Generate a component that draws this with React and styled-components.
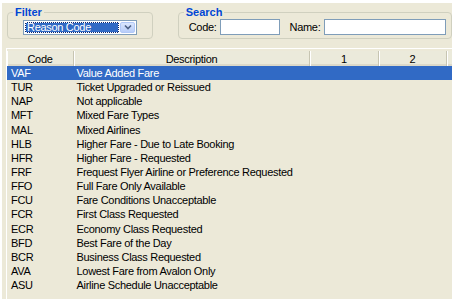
import React from "react";
import styled, { createGlobalStyle } from "styled-components";

const GlobalStyle = createGlobalStyle`
  html, body {
    margin: 0;
    padding: 0;
    background: #ffffff;
  }
  body {
    font-family: "Liberation Sans", Arial, sans-serif;
    font-size: 11px;
    letter-spacing: -0.3px;
    color: #000000;
  }
`;

const reasons = [
  ["VAF", "Value Added Fare"],
  ["TUR", "Ticket Upgraded or Reissued"],
  ["NAP", "Not applicable"],
  ["MFT", "Mixed Fare Types"],
  ["MAL", "Mixed Airlines"],
  ["HLB", "Higher Fare - Due to Late Booking"],
  ["HFR", "Higher Fare - Requested"],
  ["FRF", "Frequest Flyer Airline or Preference Requested"],
  ["FFO", "Full Fare Only Available"],
  ["FCU", "Fare Conditions Unacceptable"],
  ["FCR", "First Class Requested"],
  ["ECR", "Economy Class Requested"],
  ["BFD", "Best Fare of the Day"],
  ["BCR", "Business Class Requested"],
  ["AVA", "Lowest Fare from Avalon Only"],
  ["ASU", "Airline Schedule Unacceptable"],
];

const Panel = styled.div`
  margin: 3px 5px 0 2px;
  height: 296px;
  background: #ece9d8;
  overflow: hidden;
  display: flex;
  flex-direction: column;
`;

const TopBar = styled.div`
  display: flex;
  align-items: flex-start;
  gap: 25px;
  padding: 3px 0 0 5px;
  height: 38px;
`;

const Group = styled.fieldset`
  margin: 0;
  width: ${(p) => p.$width}px;
  height: 33px;
  box-sizing: border-box;
  border: 1px solid #d0d0bf;
  border-radius: 4px;
  padding: 0 0 0 ${(p) => p.$padLeft}px;
  display: flex;
  align-items: center;
`;

const Legend = styled.legend`
  color: #0046d5;
  font-weight: bold;
  font-size: 11px;
  line-height: 12px;
  letter-spacing: 0;
  padding: 0 2px;
  margin-left: ${(p) => 5 - p.$padLeft}px;
`;

const Select = styled.div`
  width: 114px;
  height: 15px;
  margin-top: -2px;
  box-sizing: border-box;
  border: 1px solid #7f9db9;
  background: #ffffff;
  display: flex;
  align-items: stretch;
  padding: 1px;
`;

const SelectValue = styled.div`
  flex: 1;
  background: #316ac5;
  color: #ffffff;
  outline: 1px dotted #ffffff;
  outline-offset: -1px;
  line-height: 11px;
  padding-left: 2px;
  box-shadow: inset 0 0 0 1px #0a246a;
`;

const SelectButton = styled.div`
  width: 15px;
  margin-left: 1px;
  background: linear-gradient(#dae6fd, #b8cdf9);
  border: 1px solid #b1c8f7;
  box-sizing: border-box;
  border-radius: 2px;
  display: flex;
  align-items: center;
  justify-content: center;
`;

const Label = styled.span`
  margin-top: -2px;
  margin-left: ${(p) => p.$left || 0}px;
  margin-right: ${(p) => p.$right || 0}px;
`;

const TextInput = styled.input`
  width: ${(p) => p.$width}px;
  height: 16px;
  margin-top: -2px;
  box-sizing: border-box;
  border: 1px solid #7f9db9;
  background: #ffffff;
  padding: 0 2px;
  font: inherit;
`;

const ListView = styled.div`
  margin: 4px 0 0 4px;
  border-top: 1px solid #ffffff;
  border-left: 1px solid #ffffff;
  padding-top: 2px;
  flex: 1;
`;

const Grid = styled.table`
  border-collapse: collapse;
  table-layout: fixed;
  width: 446px;
`;

const HeadCell = styled.th`
  width: ${(p) => p.$width}px;
  height: 15px;
  padding: 0;
  font-weight: normal;
  text-align: center;
  background: #ebeadb;
  border-right: 1px solid #c7c5b2;
  box-shadow: inset 1px 0 0 #ffffff, inset 0 -2px 0 #dcd9c9;
  line-height: 14px;
`;

const Row = styled.tr`
  height: 14.15px;
  background: ${(p) => (p.$selected ? "#316ac5" : "transparent")};
  color: ${(p) => (p.$selected ? "#ffffff" : "#000000")};
`;

const Cell = styled.td`
  padding: 0 0 0 ${(p) => p.$pad || 0}px;
  line-height: 14px;
  white-space: nowrap;
  overflow: hidden;
`;

const Chevron = () => (
  <svg width="8" height="6" viewBox="0 0 8 6">
    <path d="M1 1.5 L4 4.5 L7 1.5" fill="none" stroke="#4d6185" strokeWidth="1.6" />
  </svg>
);

export default function App() {
  return (
    <>
      <GlobalStyle />
      <Panel>
        <TopBar>
          <Group $width={146} $padLeft={15}>
            <Legend $padLeft={15}>Filter</Legend>
            <Select>
              <SelectValue>Reason Code</SelectValue>
              <SelectButton>
                <Chevron />
              </SelectButton>
            </Select>
          </Group>
          <Group $width={275} $padLeft={10}>
            <Legend $padLeft={10}>Search</Legend>
            <Label $right={3}>Code:</Label>
            <TextInput $width={60} />
            <Label $left={10} $right={4}>Name:</Label>
            <TextInput $width={122} />
          </Group>
        </TopBar>
        <ListView>
          <Grid>
            <thead>
              <tr>
                <HeadCell $width={66}>Code</HeadCell>
                <HeadCell $width={235}>Description</HeadCell>
                <HeadCell $width={68}>1</HeadCell>
                <HeadCell $width={67}>2</HeadCell>
                <HeadCell $width={10}></HeadCell>
              </tr>
            </thead>
            <tbody>
              {reasons.map(([code, desc], i) => (
                <Row key={code} $selected={i === 0}>
                  <Cell $pad={4}>{code}</Cell>
                  <Cell $pad={3}>{desc}</Cell>
                  <Cell />
                  <Cell />
                  <Cell />
                </Row>
              ))}
            </tbody>
          </Grid>
        </ListView>
      </Panel>
    </>
  );
}
